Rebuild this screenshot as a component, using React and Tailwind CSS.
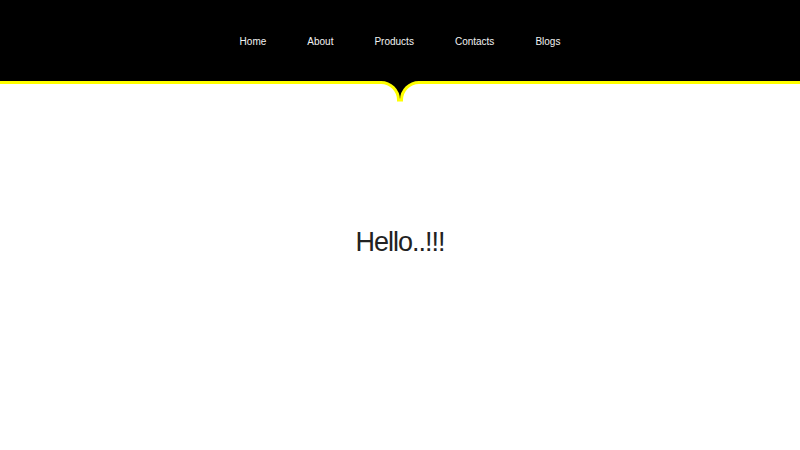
import React from "react";

const links = ["Home", "About", "Products", "Contacts", "Blogs"];

const Notch = () => (
  <svg
    className="absolute left-1/2 top-[78px] -translate-x-1/2"
    width="60"
    height="26"
    viewBox="370 78 60 26"
  >
    <path
      d="M370 78 V82.5 H381 A17.5 17.5 0 0 1 398.5 100 L401.5 100 A17.5 17.5 0 0 1 419 82.5 H430 V78 Z"
      fill="#000"
    />
    <path
      d="M368 82.5 H381 A17.5 17.5 0 0 1 398.5 100 L401.5 100 A17.5 17.5 0 0 1 419 82.5 H432"
      fill="none"
      stroke="#ffff00"
      strokeWidth="3"
    />
  </svg>
);

export default function App() {
  return (
    <div className="relative min-h-[450px] w-full bg-white font-['Liberation_Sans',Arial,sans-serif]">
      <header className="relative h-[84px] bg-black border-b-[3px] border-[#ffff00]">
        <nav className="flex justify-center pt-[34px]">
          {links.map((l) => (
            <a key={l} href="#" className="px-[20.5px] text-[10px] leading-[16px] text-[#f2f2f2]">
              {l}
            </a>
          ))}
        </nav>
      </header>
      <Notch />
      <main className="flex justify-center pt-[141px]">
        <h1 className="text-[27px] leading-[34px] tracking-[-1px] text-[#222]">Hello..!!!</h1>
      </main>
    </div>
  );
}
